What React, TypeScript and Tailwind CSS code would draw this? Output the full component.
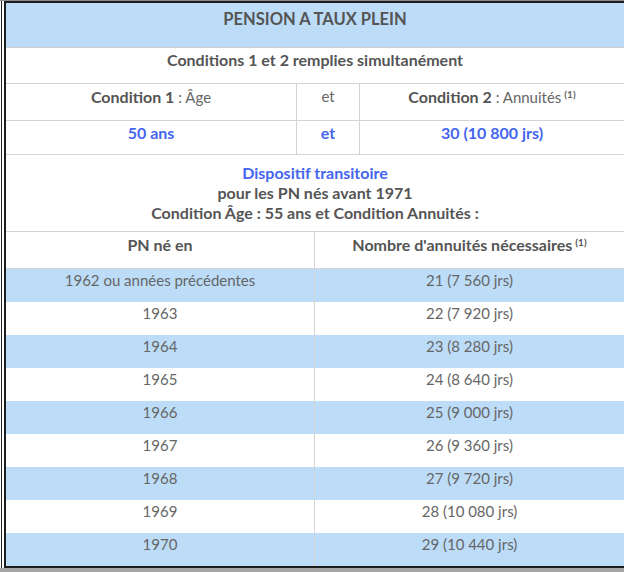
const rows = [
  ['1962 ou années précédentes', '21 (7 560 jrs)'],
  ['1963', '22 (7 920 jrs)'],
  ['1964', '23 (8 280 jrs)'],
  ['1965', '24 (8 640 jrs)'],
  ['1966', '25 (9 000 jrs)'],
  ['1967', '26 (9 360 jrs)'],
  ['1968', '27 (9 720 jrs)'],
  ['1969', '28 (10 080 jrs)'],
  ['1970', '29 (10 440 jrs)'],
];

function Note() {
  return <sup className="text-[10px] font-bold ml-[3px] -top-[5px]">(1)</sup>;
}

export default function App() {
  return (
    <div
      className="w-[624px] h-[572px] bg-[#a6a6a6] overflow-hidden text-[15px] text-[#666]"
      style={{ fontFamily: 'Lato, "Liberation Sans", sans-serif' }}
    >
      <div className="h-[568px] bg-white border-t border-[#8c8c8c] pl-px">
        <div className="h-full border-l border-[#222] pl-[2px]">
          <div className="h-full border-l-2 border-t-2 border-b-2 border-[#1c1c1c] flex flex-col">
            {/* titre */}
            <div className="h-[45px] bg-[#bcdcf8] border-b border-[#d0d0d0] flex items-center justify-center pb-[12px]">
              <span className="text-[16.5px] font-bold text-[#555]">PENSION A TAUX PLEIN</span>
            </div>

            <div className="h-[36px] border-b border-[#d4d4d4] flex items-center justify-center pb-[12px]">
              <span className="text-[16px] font-bold text-[#555]">Conditions 1 et 2 remplies simultanément</span>
            </div>

            {/* conditions */}
            <div className="h-[37px] border-b border-[#d4d4d4] flex">
              <div className="w-[291px] border-r border-[#d4d4d4] flex justify-center pt-[1px]">
                <span>
                  <b className="text-[16px] text-[#555]">Condition 1</b> : Âge
                </span>
              </div>
              <div className="w-[63px] border-r border-[#d4d4d4] flex justify-center pt-[1px]">et</div>
              <div className="flex-1 flex justify-center pt-[1px]">
                <span>
                  <b className="text-[16px] text-[#555]">Condition 2</b> : Annuités
                  <Note />
                </span>
              </div>
            </div>

            <div className="h-[34px] border-b border-[#d4d4d4] flex text-[16px] font-bold text-[#4466ee]">
              <div className="w-[291px] border-r border-[#d4d4d4] flex justify-center">50 ans</div>
              <div className="w-[63px] border-r border-[#d4d4d4] flex justify-center">et</div>
              <div className="flex-1 flex justify-center">30 (10 800 jrs)</div>
            </div>

            {/* transitoire */}
            <div className="h-[77px] border-b border-[#d4d4d4] flex flex-col items-center pt-[8px] text-[16px] font-bold leading-[20px] text-[#555]">
              <span className="text-[#4466ee]">Dispositif transitoire</span>
              <span>pour les PN nés avant 1971</span>
              <span>Condition Âge : 55 ans et Condition Annuités :</span>
            </div>

            <div className="h-[37px] border-b border-[#d4d4d4] flex text-[16px] font-bold text-[#555]">
              <div className="w-[309px] border-r border-[#d4d4d4] flex justify-center pt-[1px]">PN né en</div>
              <div className="flex-1 flex justify-center pt-[1px]">
                <span>
                  Nombre d'annuités nécessaires
                  <Note />
                </span>
              </div>
            </div>

            {rows.map(([year, value], i) => (
              <div
                key={year}
                className={`h-[33px] shrink-0 flex ${i % 2 === 0 ? 'bg-[#bcdcf8]' : 'bg-white'}`}
              >
                <div className="w-[309px] border-r border-[#d4d4d4] flex justify-center">{year}</div>
                <div className="flex-1 flex justify-center">{value}</div>
              </div>
            ))}
          </div>
        </div>
      </div>
    </div>
  );
}
